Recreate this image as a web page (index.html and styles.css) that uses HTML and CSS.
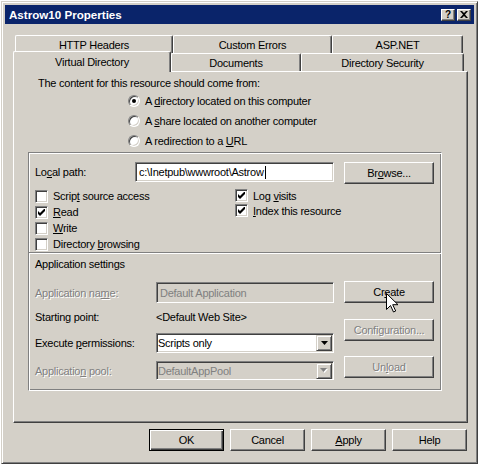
FILE: index.html
```html
<!DOCTYPE html>
<html>
<head>
<meta charset="utf-8">
<link rel="stylesheet" href="styles.css">
</head>
<body>
<div class="window">
  <div class="titlebar">
    <span class="title">Astrow10 Properties</span>
    <div class="tbtns">
      <span class="tbtn help">?</span>
      <span class="tbtn close"><svg width="8" height="7" viewBox="0 0 8 7"><path d="M0 0h2l2 2 2-2h2L5 3.5 8 7H6L4 5 2 7H0l3-3.5z" fill="#000"/></svg></span>
    </div>
  </div>
  <div class="tabs">
    <div class="tabrow back">
      <div class="tab w158">HTTP Headers</div>
      <div class="tab w159">Custom Errors</div>
      <div class="tab w131">ASP.NET</div>
    </div>
    <div class="tabrow front">
      <div class="tab sel w158">Virtual Directory</div>
      <div class="tab w130">Documents</div>
      <div class="tab w163">Directory Security</div>
    </div>
  </div>
  <div class="panel">
    <div class="intro">The content for this resource should come from:</div>
    <div class="radios">
      <div class="radio-row"><span class="radio on"></span><span>A <u>d</u>irectory located on this computer</span></div>
      <div class="radio-row"><span class="radio"></span><span>A <u>s</u>hare located on another computer</span></div>
      <div class="radio-row"><span class="radio"></span><span>A redirection to a <u>U</u>RL</span></div>
    </div>
    <div class="group">
      <div class="local">
        <div class="pathrow">
          <span class="pathlabel">Lo<u>c</u>al path:</span>
          <span class="field pathfield">c:\Inetpub\wwwroot\Astrow<span class="caret"></span></span>
          <span class="btn browse">Br<u>o</u>wse...</span>
        </div>
        <div class="checks">
          <div class="col-left">
            <div class="chk-row"><span class="chk"></span><span>Scrip<u>t</u> source access</span></div>
            <div class="chk-row"><span class="chk on"><svg width="7" height="7" viewBox="0 0 7 7"><path d="M0 2l2 2 5-5v3L2 7 0 5z" fill="#000"/></svg></span><span><u>R</u>ead</span></div>
            <div class="chk-row"><span class="chk"></span><span><u>W</u>rite</span></div>
            <div class="chk-row"><span class="chk"></span><span>Directory <u>b</u>rowsing</span></div>
          </div>
          <div class="col-right">
            <div class="chk-row r15"><span class="chk on"><svg width="7" height="7" viewBox="0 0 7 7"><path d="M0 2l2 2 5-5v3L2 7 0 5z" fill="#000"/></svg></span><span>Log <u>v</u>isits</span></div>
            <div class="chk-row r15"><span class="chk on"><svg width="7" height="7" viewBox="0 0 7 7"><path d="M0 2l2 2 5-5v3L2 7 0 5z" fill="#000"/></svg></span><span><u>I</u>ndex this resource</span></div>
          </div>
        </div>
      </div>
      <div class="divider"></div>
      <div class="app">
        <div class="app-title">Application settings</div>
        <div class="app-grid">
          <div class="app-left">
            <div class="arow r1"><span class="alabel dis">Application na<u>m</u>e:</span><span class="field afield disf">Default Application</span></div>
            <div class="arow r2"><span class="alabel">Starting point:</span><span class="aval">&lt;Default Web Site&gt;</span></div>
            <div class="arow r3"><span class="alabel">Execute <u>p</u>ermissions:</span><span class="field afield sel-field"><span class="seltext">Scripts only</span><span class="arrowbtn"><svg width="7" height="4" viewBox="0 0 7 4"><path d="M0 0h7L3.5 4z" fill="#000"/></svg></span></span></div>
            <div class="arow r4"><span class="alabel dis">Applicatio<u>n</u> pool:</span><span class="field afield sel-field disf"><span class="seltext">DefaultAppPool</span><span class="arrowbtn"><svg width="8" height="5" viewBox="0 0 8 5"><path d="M1 1h7L4.5 5z" fill="#fff"/><path d="M0 0h7L3.5 4z" fill="#808080"/></svg></span></span></div>
          </div>
          <div class="app-right">
            <span class="btn abtn create">Cr<u>e</u>ate<svg class="cursor" width="13" height="20" viewBox="0 0 13 20"><path d="M0.5 0.5v16l4-4 3 6.5 2.2-1-3-6.3h5.3z" fill="#fff" stroke="#000" stroke-width="1"/></svg></span>
            <span class="btn abtn conf dis">Confi<u>g</u>uration...</span>
            <span class="btn abtn unload dis">Un<u>l</u>oad</span>
          </div>
        </div>
      </div>
    </div>
  </div>
  <div class="buttons">
    <span class="btn dbtn def">OK</span>
    <span class="btn dbtn">Cancel</span>
    <span class="btn dbtn"><u>A</u>pply</span>
    <span class="btn dbtn">Help</span>
  </div>
</div>
</body>
</html>
```
FILE: styles.css
```css
* { box-sizing: border-box; }
html, body { margin: 0; padding: 0; }
body {
  background: #ffffff;
  font-family: "Liberation Sans", Arial, sans-serif;
  font-size: 11px;
  letter-spacing: -0.25px;
  color: #000;
  width: 480px;
  height: 466px;
  overflow: hidden;
}
u { text-decoration: underline; text-underline-offset: 1px; }

.window {
  margin: 1px 0 0 1px;
  width: 477px;
  height: 463px;
  background: #d4d0c8;
  border: 1px solid;
  border-color: #d4d0c8 #404040 #404040 #d4d0c8;
  box-shadow: inset 1px 1px #fff, inset -1px -1px #808080;
  padding: 3px;
}

.titlebar {
  height: 19px;
  background: #0a246a;
  display: flex;
  align-items: center;
  padding-left: 4px;
}
.title {
  color: #fff;
  font-weight: bold;
  font-size: 11.6px;
  letter-spacing: 0;
}
.tbtns {
  margin-left: auto;
  margin-right: 3px;
  display: flex;
  gap: 2px;
}
.tbtn {
  width: 14px;
  height: 12px;
  background: #d4d0c8;
  border: 1px solid;
  border-color: #fff #404040 #404040 #fff;
  box-shadow: inset -1px -1px #808080;
  display: flex;
  align-items: center;
  justify-content: center;
  font-weight: bold;
  font-size: 10px;
  line-height: 10px;
  letter-spacing: 0;
}

.tabs { margin-top: 11px; }
.tabrow { display: flex; height: 18px; }
.tabrow.back { margin-left: 10px; }
.tabrow.front { margin-left: 8px; align-items: flex-end; }
.tab {
  height: 18px;
  background: #d4d0c8;
  border-top: 1px solid #fff;
  border-left: 1px solid #fff;
  border-right: 1px solid #404040;
  box-shadow: inset -1px 0 #808080;
  border-radius: 2px 2px 0 0;
  display: flex;
  align-items: center;
  justify-content: center;
}
.tab.sel {
  height: 21px;
  margin-bottom: -1px;
  position: relative;
  z-index: 1;
}
.w158 { width: 158px; }
.w159 { width: 159px; }
.w131 { width: 131px; }
.w130 { width: 130px; }
.w163 { width: 163px; }

.panel {
  margin-left: 8px;
  width: 455px;
  height: 352px;
  border: 1px solid;
  border-color: #fff #404040 #404040 #fff;
  box-shadow: inset -1px -1px #808080;
}
.intro {
  margin: 4px 0 0 24px;
  height: 14px;
  line-height: 14px;
}
.radios { margin: 1px 0 0 114px; }
.radio-row {
  height: 20px;
  display: flex;
  align-items: center;
  gap: 5px;
}
.radio {
  width: 12px;
  height: 12px;
  border-radius: 50%;
  background: #fff;
  border: 1px solid;
  border-color: #808080 #fff #fff #808080;
  box-shadow: inset 1px 1px #404040, inset -1px -1px #d4d0c8;
  display: flex;
  align-items: center;
  justify-content: center;
}
.radio.on::after {
  content: "";
  width: 4px;
  height: 4px;
  border-radius: 50%;
  background: #000;
}

.group {
  margin: 1px 0 0 14px;
  width: 414px;
  height: 239px;
  border: 1px solid;
  border-color: #808080 #fff #fff #808080;
  box-shadow: inset 1px 1px #fff, inset -1px -1px #808080;
}
.local {
  height: 99px;
  padding: 9px 0 0 6px;
}
.pathrow {
  display: flex;
  height: 22px;
}
.pathlabel {
  width: 100px;
  line-height: 21px;
}
.field {
  background: #fff;
  border: 1px solid;
  border-color: #808080 #fff #fff #808080;
  box-shadow: inset 1px 1px #404040, inset -1px -1px #d4d0c8;
  padding-left: 3px;
  display: flex;
  align-items: center;
  white-space: nowrap;
}
.pathfield {
  width: 199px;
  height: 20px;
}
.caret {
  display: inline-block;
  width: 1px;
  height: 13px;
  background: #000;
  margin-left: 1px;
}
.btn {
  background: #d4d0c8;
  border: 1px solid;
  border-color: #fff #404040 #404040 #fff;
  box-shadow: inset -1px -1px #808080;
  display: flex;
  align-items: center;
  justify-content: center;
  white-space: nowrap;
}
.browse {
  width: 90px;
  height: 22px;
  margin-left: 10px;
}
.checks {
  display: flex;
  margin-top: 4px;
}
.col-left { width: 200px; }
.chk-row {
  height: 16px;
  display: flex;
  align-items: center;
  gap: 5px;
}
.chk-row.r15 { height: 15px; }
.chk {
  width: 13px;
  height: 13px;
  background: #fff;
  border: 1px solid;
  border-color: #808080 #fff #fff #808080;
  box-shadow: inset 1px 1px #404040, inset -1px -1px #d4d0c8;
  display: flex;
  align-items: center;
  justify-content: center;
  flex: none;
}
.chk svg { display: block; }
.divider {
  height: 2px;
  border-top: 1px solid #808080;
  border-bottom: 1px solid #fff;
}
.app { padding: 3px 0 0 6px; }
.app-title {
  height: 14px;
  line-height: 14px;
}
.app-grid {
  display: flex;
  margin-top: 10px;
}
.app-left { width: 299px; }
.arow {
  display: flex;
  align-items: center;
}
.r1 { margin-top: 1px; height: 21px; }
.r2 { margin-top: 5px; height: 18px; }
.r3 { margin-top: 7px; height: 20px; }
.r4 { margin-top: 8px; height: 19px; }
.alabel { width: 121px; }
.afield {
  width: 178px;
  height: 100%;
}
.aval { white-space: nowrap; }
.dis {
  color: #808080;
  text-shadow: 1px 1px 0 #fff;
}
.disf {
  background: #d4d0c8;
  color: #808080;
}
.sel-field { padding-left: 1px; }
.seltext { flex: 1; }
.arrowbtn {
  width: 16px;
  height: 16px;
  margin-right: 1px;
  background: #d4d0c8;
  border: 1px solid;
  border-color: #d4d0c8 #404040 #404040 #d4d0c8;
  box-shadow: inset 1px 1px #fff, inset -1px -1px #808080;
  display: flex;
  align-items: center;
  justify-content: center;
}
.arrowbtn svg { display: block; }
.app-right {
  margin-left: 10px;
  display: flex;
  flex-direction: column;
}
.abtn {
  width: 90px;
  height: 22px;
}
.create { position: relative; }
.conf { margin-top: 16px; }
.unload { margin-top: 15px; }
.cursor {
  position: absolute;
  left: 41px;
  top: 11px;
}

.buttons {
  display: flex;
  gap: 6px;
  margin: 6px 0 0 144px;
}
.dbtn {
  width: 75px;
  height: 22px;
}
.dbtn.def {
  border-color: #000;
  box-shadow: inset 1px 1px #fff, inset -1px -1px #404040, inset -2px -2px #808080;
}
```
